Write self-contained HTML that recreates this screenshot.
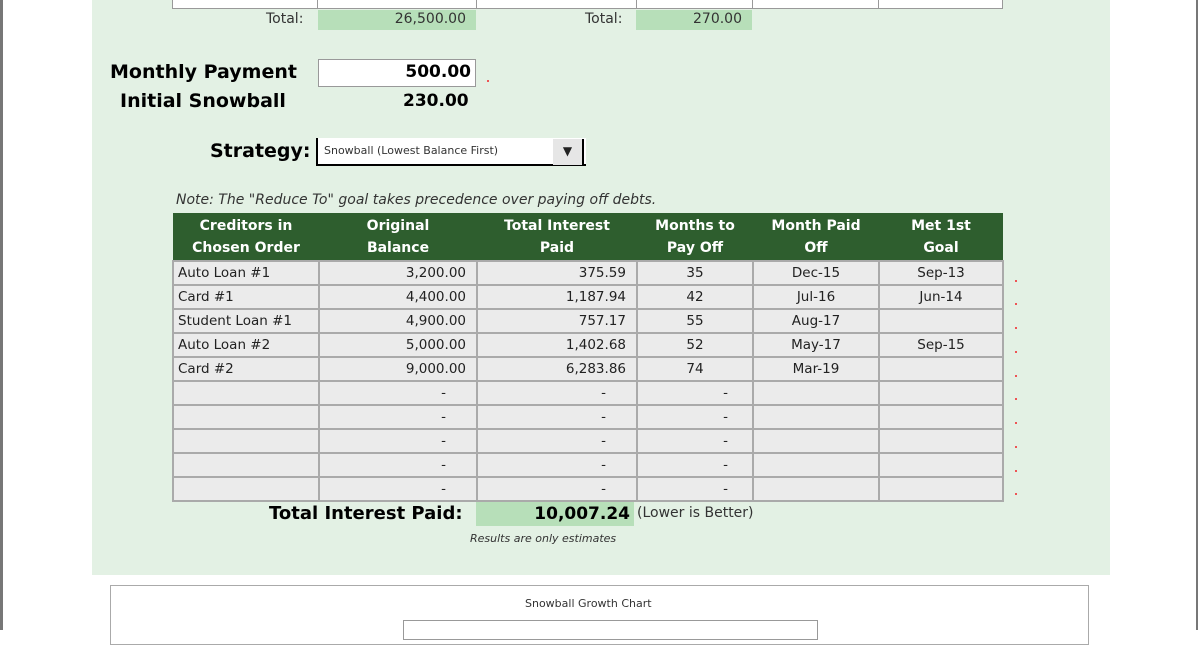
<!DOCTYPE html>
<html><head><meta charset="utf-8"><style>
*{margin:0;padding:0;box-sizing:border-box}
body{width:1200px;height:630px;overflow:hidden;background:#fff;position:relative;font-family:"DejaVu Sans","Liberation Sans",sans-serif;color:#222}
.a{position:absolute}
.panel{left:92px;top:0;width:1018px;height:575px;background:#e3f1e4}
.c{position:absolute;border:1px solid #999;background:#fff}
.g{background:#b7dfb9}
table{position:absolute;left:172px;top:213px;border-collapse:collapse;font-size:13.5px}
td{border:2px solid #aaa;background:#ebebeb;height:24px;padding:0 4px;white-space:nowrap}
th{background:#2e5e2e;color:#fff;font-size:14px;font-weight:bold;line-height:22px;height:48px;border:none;padding:0}
.r{text-align:right;padding-right:10px}.m{text-align:center}
.dot{position:absolute;left:1015px;width:2px;height:2px;background:#e55}
.b{font-weight:bold;font-size:19px;letter-spacing:0}
</style></head><body>
<div class="a" style="left:0;top:0;width:3px;height:630px;background:#777"></div>
<div class="a" style="left:1196px;top:0;width:2px;height:630px;background:#777"></div>
<div class="a panel"></div>
<div class="c" style="left:172px;top:-2px;width:146px;height:11px"></div>
<div class="c" style="left:317px;top:-2px;width:160px;height:11px"></div>
<div class="c" style="left:476px;top:-2px;width:161px;height:11px"></div>
<div class="c" style="left:636px;top:-2px;width:117px;height:11px"></div>
<div class="c" style="left:752px;top:-2px;width:127px;height:11px"></div>
<div class="c" style="left:878px;top:-2px;width:125px;height:11px"></div>
<div class="a" style="left:266px;top:11px;font-size:14px;color:#333">Total:</div>
<div class="a g" style="left:318px;top:10px;width:158px;height:20px;font-size:14px;text-align:right;padding:1px 10px;color:#333">26,500.00</div>
<div class="a" style="left:585px;top:11px;font-size:14px;color:#333">Total:</div>
<div class="a g" style="left:636px;top:10px;width:116px;height:20px;font-size:14px;text-align:right;padding:1px 10px;color:#333">270.00</div>

<div class="a b" style="left:110px;top:61px;color:#000">Monthly Payment</div>
<div class="a" style="left:318px;top:59px;width:158px;height:28px;background:#fff;border:1px solid #999;text-align:right;padding:2px 4px;font-weight:bold;font-size:17px;color:#000">500.00</div>
<div class="a" style="left:487px;top:80px;width:2px;height:2px;background:#e55"></div>
<div class="a b" style="left:120px;top:90px;color:#000">Initial Snowball</div>
<div class="a" style="left:403px;top:91px;font-weight:bold;font-size:17px;color:#000">230.00</div>

<div class="a b" style="left:210px;top:140px;color:#000">Strategy:</div>
<div class="a" style="left:316px;top:138px;width:270px;height:28px;background:#fff;border-left:2px solid #000;border-bottom:2px solid #000;font-size:11px;padding:6px 6px;color:#333">Snowball (Lowest Balance First)</div>
<div class="a" style="left:553px;top:139px;width:31px;height:26px;background:#e6e6e6;border-right:2px solid #000;font-size:12px;text-align:center;line-height:24px">▼</div>

<div class="a" style="left:176px;top:192px;font-size:14px;font-style:italic;color:#333">Note: The "Reduce To" goal takes precedence over paying off debts.</div>
<table>
<tr><th style="width:146px">Creditors in<br>Chosen Order</th><th style="width:158px">Original<br>Balance</th><th style="width:160px">Total Interest<br>Paid</th><th style="width:116px">Months to<br>Pay Off</th><th style="width:126px">Month Paid<br>Off</th><th style="width:124px">Met 1st<br>Goal</th></tr>
<tr><td>Auto Loan #1</td><td class="r">3,200.00</td><td class="r">375.59</td><td class="m">35</td><td class="m">Dec-15</td><td class="m">Sep-13</td></tr>
<tr><td>Card #1</td><td class="r">4,400.00</td><td class="r">1,187.94</td><td class="m">42</td><td class="m">Jul-16</td><td class="m">Jun-14</td></tr>
<tr><td>Student Loan #1</td><td class="r">4,900.00</td><td class="r">757.17</td><td class="m">55</td><td class="m">Aug-17</td><td></td></tr>
<tr><td>Auto Loan #2</td><td class="r">5,000.00</td><td class="r">1,402.68</td><td class="m">52</td><td class="m">May-17</td><td class="m">Sep-15</td></tr>
<tr><td>Card #2</td><td class="r">9,000.00</td><td class="r">6,283.86</td><td class="m">74</td><td class="m">Mar-19</td><td></td></tr>
<tr><td></td><td class="r" style="padding-right:30px">-</td><td class="r" style="padding-right:30px">-</td><td class="r" style="padding-right:24px">-</td><td></td><td></td></tr>
<tr><td></td><td class="r" style="padding-right:30px">-</td><td class="r" style="padding-right:30px">-</td><td class="r" style="padding-right:24px">-</td><td></td><td></td></tr>
<tr><td></td><td class="r" style="padding-right:30px">-</td><td class="r" style="padding-right:30px">-</td><td class="r" style="padding-right:24px">-</td><td></td><td></td></tr>
<tr><td></td><td class="r" style="padding-right:30px">-</td><td class="r" style="padding-right:30px">-</td><td class="r" style="padding-right:24px">-</td><td></td><td></td></tr>
<tr><td></td><td class="r" style="padding-right:30px">-</td><td class="r" style="padding-right:30px">-</td><td class="r" style="padding-right:24px">-</td><td></td><td></td></tr>
</table>
<div class="dot" style="top:280px"></div><div class="dot" style="top:303px"></div><div class="dot" style="top:327px"></div><div class="dot" style="top:351px"></div><div class="dot" style="top:375px"></div><div class="dot" style="top:398px"></div><div class="dot" style="top:422px"></div><div class="dot" style="top:446px"></div><div class="dot" style="top:470px"></div><div class="dot" style="top:493px"></div>

<div class="a" style="left:269px;top:503px;font-weight:bold;font-size:18px;color:#000">Total Interest Paid:</div>
<div class="a g" style="left:476px;top:502px;width:158px;height:24px;text-align:right;padding:2px 4px;font-weight:bold;font-size:17px;color:#000">10,007.24</div>
<div class="a" style="left:637px;top:505px;font-size:14px;color:#333">(Lower is Better)</div>
<div class="a" style="left:470px;top:532px;font-size:11px;font-style:italic;color:#333">Results are only estimates</div>

<div class="a" style="left:110px;top:585px;width:979px;height:60px;border:1px solid #aaa;background:#fff"></div>
<div class="a" style="left:525px;top:597px;font-size:11px;color:#333">Snowball Growth Chart</div>
<div class="a" style="left:403px;top:620px;width:415px;height:20px;border:1px solid #999;background:#fff"></div>
</body></html>
